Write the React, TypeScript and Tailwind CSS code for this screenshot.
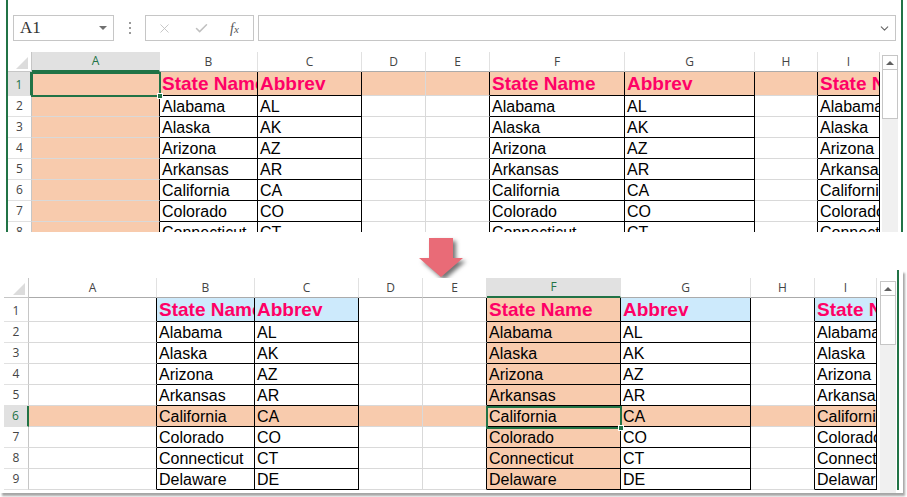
import { X, Check, ChevronDown } from "lucide-react";

const STATES = ["State Name", "Alabama", "Alaska", "Arizona", "Arkansas", "California", "Colorado", "Connecticut", "Delaware"];
const ABBR = ["Abbrev", "AL", "AK", "AZ", "AR", "CA", "CO", "CT", "DE"];

type Col = { k: string; w: string };

const TOP_COLS: Col[] = [
  { k: "A", w: "w-[128px]" },
  { k: "B", w: "w-[98px]" },
  { k: "C", w: "w-[104px]" },
  { k: "D", w: "w-[64px]" },
  { k: "E", w: "w-[64px]" },
  { k: "F", w: "w-[135px]" },
  { k: "G", w: "w-[130px]" },
  { k: "H", w: "w-[63px]" },
  { k: "I", w: "w-[62px]" },
];

const BOTTOM_COLS: Col[] = [
  { k: "A", w: "w-[128px]" },
  { k: "B", w: "w-[98px]" },
  { k: "C", w: "w-[104px]" },
  { k: "D", w: "w-[64px]" },
  { k: "E", w: "w-[64px]" },
  { k: "F", w: "w-[134px]" },
  { k: "G", w: "w-[130px]" },
  { k: "H", w: "w-[64px]" },
  { k: "I", w: "w-[62px]" },
];

const TABLE = ["B", "C", "F", "G", "I"];
const BEFORE_TABLE = ["A", "E", "H"];

function value(col: string, row: number) {
  if (col === "B" || col === "F" || col === "I") return STATES[row - 1];
  if (col === "C" || col === "G") return ABBR[row - 1];
  return "";
}

const PEACH = "bg-[#f8cbad]";
const BLUE = "bg-[#cdeafc]";

function topFill(col: string, row: number) {
  if (row === 1 || col === "A") return PEACH;
  return "bg-white";
}

function bottomFill(col: string, row: number) {
  if (row === 6 || col === "F") return PEACH;
  if (row === 1 && TABLE.includes(col)) return BLUE;
  return "bg-white";
}

function Scrollbar() {
  return (
    <div className="w-[16px] mt-[3px] self-stretch flex flex-col bg-[#f0f0f0]">
      <div className="h-[15px] border border-[#c6c6c6] bg-white flex items-center justify-center">
        <div className="w-0 h-0 border-l-[4px] border-r-[4px] border-b-[4px] border-l-transparent border-r-transparent border-b-[#606060]" />
      </div>
      <div className="h-[49px] border border-t-0 border-[#c6c6c6] bg-white" />
    </div>
  );
}

function Sheet({
  cols,
  rhw,
  headH,
  rows,
  fill,
  activeCol,
  activeRow,
}: {
  cols: Col[];
  rhw: string;
  headH: string;
  rows: number;
  fill: (col: string, row: number) => string;
  activeCol: string;
  activeRow: number;
}) {
  return (
    <div className="flex flex-col font-['Liberation_Sans',Arial,sans-serif]">
      {/* column letters */}
      <div className={`flex ${headH}`}>
        <div className={`${rhw} shrink-0 border-r border-b border-[#c6c6c6] bg-white flex items-end justify-end pr-[3px] pb-[2px]`}>
          <svg width="12" height="12" viewBox="0 0 12 12">
            <polygon points="12,0 12,12 0,12" fill="#dcdcdc" />
          </svg>
        </div>
        {cols.map((c) => {
          const on = c.k === activeCol;
          return (
            <div
              key={c.k}
              className={`${c.w} shrink-0 flex items-center justify-center text-[12px] font-['Open_Sans',sans-serif] border-r border-r-[#e1e1e1] ${
                on ? "bg-[#e1e1e1] text-[#217346] border-b-2 border-b-[#217346]" : "bg-white text-[#444] border-b border-b-[#ababab]"
              }`}
            >
              {c.k}
            </div>
          );
        })}
      </div>
      {Array.from({ length: rows }, (_, i) => i + 1).map((r) => {
        const onRow = r === activeRow;
        const h = r === 1 ? "h-[24px]" : "h-[21px]";
        return (
          <div key={r} className={`flex ${h}`}>
            <div
              className={`${rhw} shrink-0 flex items-end justify-center pb-[1px] text-[12px] font-['Open_Sans',sans-serif] border-b border-b-[#e1e1e1] ${
                onRow ? "bg-[#e1e1e1] text-[#217346] border-r-2 border-r-[#217346]" : "bg-white text-[#444] border-r border-r-[#c6c6c6]"
              }`}
            >
              {r}
            </div>
            {cols.map((c) => {
              const inTable = TABLE.includes(c.k);
              const before = BEFORE_TABLE.includes(c.k);
              const v = value(c.k, r);
              return (
                <div
                  key={c.k}
                  className={`${c.w} shrink-0 overflow-hidden whitespace-nowrap pl-[2px] flex items-end border-r border-b ${fill(c.k, r)} ${
                    inTable ? "border-black" : before ? "border-r-black border-b-[#d9d9d9]" : "border-[#d9d9d9]"
                  }`}
                >
                  {r === 1 ? (
                    <span className="text-[19px] leading-[22px] font-bold text-[#ff0066]">{v}</span>
                  ) : (
                    <span className="text-[16px] leading-[19px] text-black">{v}</span>
                  )}
                </div>
              );
            })}
          </div>
        );
      })}
    </div>
  );
}

function FormulaBar() {
  return (
    <div className="flex h-[26px] items-stretch pl-[5px] pr-[5px]">
      <div className="w-[101px] border border-[#c6c6c6] flex items-center justify-between pl-[6px] pr-[6px] font-['Liberation_Serif',serif] text-[17px] text-[#333]">
        <span>A1</span>
        <div className="w-0 h-0 border-l-[4px] border-r-[4px] border-t-[4px] border-l-transparent border-r-transparent border-t-[#707070]" />
      </div>
      <div className="w-[31px] flex flex-col items-center justify-center gap-[3px]">
        <div className="w-[2px] h-[2px] bg-[#9a9a9a]" />
        <div className="w-[2px] h-[2px] bg-[#9a9a9a]" />
        <div className="w-[2px] h-[2px] bg-[#9a9a9a]" />
      </div>
      <div className="w-[109px] border border-[#c6c6c6] flex items-center pl-[11px] text-[#c0c0c0]">
        <X size={15} strokeWidth={1.4} />
        <Check size={15} strokeWidth={2.4} className="ml-[22px]" />
        <span className="ml-[21px] font-['Liberation_Serif',serif] italic text-[14px] text-[#555]">
          f<span className="text-[11px]">x</span>
        </span>
      </div>
      <div className="ml-[4px] flex-1 border border-[#c6c6c6] flex items-center justify-end pr-[4px] text-[#666]">
        <ChevronDown size={13} strokeWidth={2} />
      </div>
    </div>
  );
}

export default function App() {
  return (
    <div className="relative w-[907px] h-[497px] bg-white overflow-hidden">
      {/* top: before */}
      <div className="ml-[6px] w-[897px] h-[232px] overflow-hidden border-l-2 border-r-2 border-[#217346] pt-[15px]">
        <FormulaBar />
        <div className="flex mt-[11px] items-start">
          <div className="relative">
            <Sheet cols={TOP_COLS} rhw="w-[24px]" headH="h-[20px]" rows={8} fill={topFill} activeCol="A" activeRow={1} />
            <div className="absolute left-[23px] top-[20px] w-[130px] h-[25px] border-2 border-[#217346]">
              <div className="absolute -right-[4px] -bottom-[4px] w-[6px] h-[6px] bg-[#217346] border border-white" />
            </div>
          </div>
          <div className="ml-[2px] h-[180px] flex">
            <Scrollbar />
          </div>
        </div>
      </div>

      {/* arrow */}
      <svg className="absolute left-[418px] top-[236px] drop-shadow-[3px_3px_2px_rgba(0,0,0,0.55)]" width="50" height="44" viewBox="0 0 50 44">
        <polygon points="11,2 35,2 35,22 45,22 23,41 1,22 11,22" fill="#e96b77" />
      </svg>

      {/* bottom: after */}
      <div className="mt-[38px] w-[903px] h-[223px] bg-white pl-[4px] pt-[8px] shadow-[2px_3px_2px_rgba(0,0,0,0.35)] flex items-start">
        <div className="relative">
          <Sheet cols={BOTTOM_COLS} rhw="w-[25px]" headH="h-[20px]" rows={9} fill={bottomFill} activeCol="F" activeRow={6} />
          <div className="absolute left-[482px] top-[128px] w-[136px] h-[23px] border-2 border-[#217346]">
            <div className="absolute -right-[4px] -bottom-[4px] w-[6px] h-[6px] bg-[#217346] border border-white" />
          </div>
        </div>
        <div className="ml-[3px] h-[215px] flex">
          <Scrollbar />
        </div>
        <div className="ml-[1px] -mt-[8px] w-[2px] h-[220px] bg-[#217346]" />
      </div>
    </div>
  );
}
